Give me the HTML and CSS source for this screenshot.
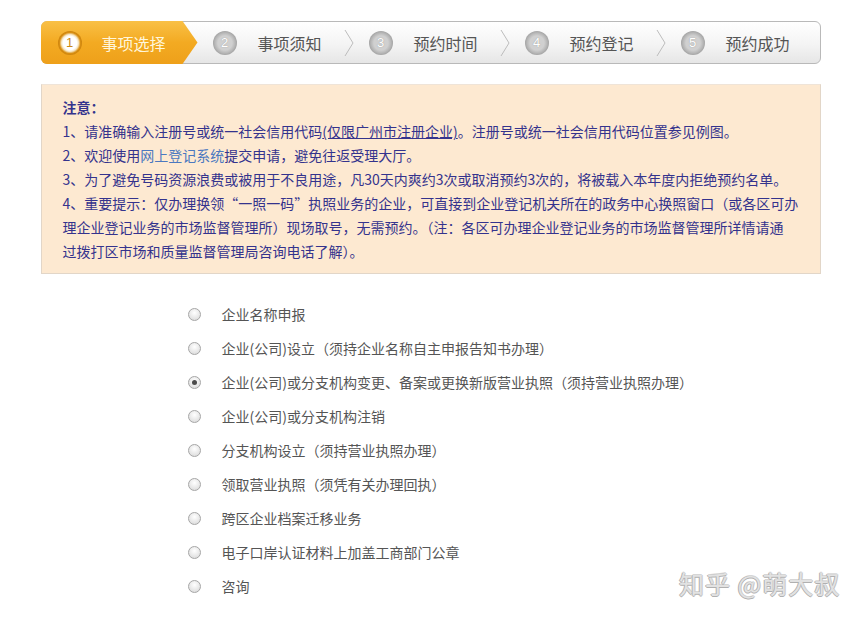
FILE: index.html
```html
<!DOCTYPE html>
<html lang="zh-CN">
<head>
<meta charset="utf-8">
<title>预约 - 事项选择</title>
<link rel="stylesheet" href="styles.css">
</head>
<body>
<div class="page">
  <div class="steps">
    <div class="step step-active">
      <span class="num">1</span>
      <span class="label">事项选择</span>
    </div>
    <div class="step">
      <span class="num">2</span>
      <span class="label">事项须知</span>
      <svg class="chev" width="10" height="28" viewBox="0 0 10 28"><polyline points="1,1 9,14 1,27" fill="none" stroke="#bdbdbd" stroke-width="1"/></svg>
    </div>
    <div class="step">
      <span class="num">3</span>
      <span class="label">预约时间</span>
      <svg class="chev" width="10" height="28" viewBox="0 0 10 28"><polyline points="1,1 9,14 1,27" fill="none" stroke="#bdbdbd" stroke-width="1"/></svg>
    </div>
    <div class="step">
      <span class="num">4</span>
      <span class="label">预约登记</span>
      <svg class="chev" width="10" height="28" viewBox="0 0 10 28"><polyline points="1,1 9,14 1,27" fill="none" stroke="#bdbdbd" stroke-width="1"/></svg>
    </div>
    <div class="step">
      <span class="num">5</span>
      <span class="label">预约成功</span>
    </div>
  </div>

  <div class="notice">
    <div class="line title">注意：</div>
    <div class="line">1、请准确输入注册号或统一社会信用代码<a class="ul">(仅限广州市注册企业)</a>。注册号或统一社会信用代码位置参见例图。</div>
    <div class="line">2、欢迎使用<a class="sys">网上登记系统</a>提交申请，避免往返受理大厅。</div>
    <div class="line">3、为了避免号码资源浪费或被用于不良用途，凡30天内爽约3次或取消预约3次的，将被载入本年度内拒绝预约名单。</div>
    <div class="line">4、重要提示：仅办理换领“一照一码”执照业务的企业，可直接到企业登记机关所在的政务中心换照窗口（或各区可办</div>
    <div class="line">理企业登记业务的市场监督管理所）现场取号，无需预约。（注：各区可办理企业登记业务的市场监督管理所详情请通</div>
    <div class="line">过拨打区市场和质量监督管理局咨询电话了解）。</div>
  </div>

  <ul class="options">
    <li><span class="radio"></span><span class="opt">企业名称申报</span></li>
    <li><span class="radio"></span><span class="opt">企业(公司)设立（须持企业名称自主申报告知书办理）</span></li>
    <li><span class="radio checked"></span><span class="opt">企业(公司)或分支机构变更、备案或更换新版营业执照（须持营业执照办理）</span></li>
    <li><span class="radio"></span><span class="opt">企业(公司)或分支机构注销</span></li>
    <li><span class="radio"></span><span class="opt">分支机构设立（须持营业执照办理）</span></li>
    <li><span class="radio"></span><span class="opt">领取营业执照（须凭有关办理回执）</span></li>
    <li><span class="radio"></span><span class="opt">跨区企业档案迁移业务</span></li>
    <li><span class="radio"></span><span class="opt">电子口岸认证材料上加盖工商部门公章</span></li>
    <li><span class="radio"></span><span class="opt">咨询</span></li>
  </ul>
</div>
<div class="watermark">知乎 @萌大叔</div>
</body>
</html>
```
FILE: styles.css
```css
html, body {
  margin: 0;
  padding: 0;
  background: #ffffff;
}
body {
  font-family: "Noto Sans CJK SC", "Noto Sans", sans-serif;
  position: relative;
  width: 861px;
  height: 618px;
  overflow: hidden;
}
.page {
  width: 780px;
  margin: 0 auto;
  padding-top: 21px;
}

/* step bar */
.steps {
  display: flex;
  height: 43px;
  box-sizing: border-box;
  border: 1px solid #b9b9b9;
  border-radius: 6px;
  background: linear-gradient(#ffffff, #f4f4f4 55%, #e6e6e6);
}
.step {
  width: 156px;
  display: flex;
  align-items: center;
  position: relative;
  flex: none;
}
.step-active {
  margin: -1px 0 -1px -1px;
  height: 43px;
  width: 157px;
  background: linear-gradient(#f9c046, #f3aa22 50%, #eea01a);
  clip-path: polygon(0 0, 142px 0, 157px 50%, 142px 100%, 0 100%);
  border-radius: 6px 0 0 6px;
}
.num {
  width: 24px;
  height: 24px;
  border-radius: 50%;
  margin-left: 15px;
  flex: none;
  display: flex;
  align-items: center;
  justify-content: center;
  font-family: "Liberation Sans", Arial, sans-serif;
  font-size: 13px;
  color: #ffffff;
  text-shadow: 0 0 1px #8e8e8e;
  background: radial-gradient(circle at 50% 50%, #d0d0d0 0 42%, #b9b9b9 58%, #a2a2a2 72%, #e4e4e4 82%, #f4f4f4 100%);
}
.step-active .num {
  margin-left: 17px;
  color: #c98a16;
  text-shadow: none;
  background: radial-gradient(circle at 50% 50%, #ffffff 0 40%, #f6e6c4 50%, #d98f12 62%, #c77e0b 74%, #f8c75f 86%, #f6b83a 100%);
}
.label {
  margin-left: 21px;
  font-size: 16px;
  color: #555555;
  white-space: nowrap;
}
.step-active .label {
  margin-left: 20px;
  color: #fff6dc;
}
.chev {
  position: absolute;
  right: 0;
  top: 7px;
}

/* notice */
.notice {
  margin-top: 20px;
  box-sizing: border-box;
  height: 190px;
  padding: 10px 8px 9px 21px;
  background: #fde9d1;
  border: 1px solid #e2d6c8;
  border-top-color: #efe4d8;
  color: #34338d;
  font-size: 14px;
  line-height: 24px;
}
.line {
  white-space: nowrap;
}
.title {
  font-weight: bold;
}
.ul {
  text-decoration: underline;
  color: #34338d;
}
.sys {
  color: #4b78c0;
}

/* options */
.options {
  list-style: none;
  margin: 23px 0 0 0;
  padding: 0 0 0 147px;
}
.options li {
  height: 34px;
  display: flex;
  align-items: center;
}
.radio {
  width: 13px;
  height: 13px;
  box-sizing: border-box;
  border-radius: 50%;
  border: 1px solid #a6a6a6;
  background: radial-gradient(circle at 50% 35%, #ffffff, #d6d6d6);
  flex: none;
  position: relative;
}
.radio.checked::after {
  content: "";
  position: absolute;
  left: 3px;
  top: 3px;
  width: 5px;
  height: 5px;
  border-radius: 50%;
  background: #4a4a4a;
}
.opt {
  margin-left: 21px;
  font-size: 14px;
  color: #555555;
  white-space: nowrap;
}

.watermark {
  position: absolute;
  left: 679px;
  top: 567px;
  font-size: 25px;
  line-height: 32px;
  color: #e2e2e2;
  text-shadow: -1px 0 0 #b0b0b0, 0 1px 0 #b0b0b0, 1px 0 0 #cfcfcf, 0 -1px 0 #d6d6d6;
  letter-spacing: 1px;
  white-space: nowrap;
}
```
